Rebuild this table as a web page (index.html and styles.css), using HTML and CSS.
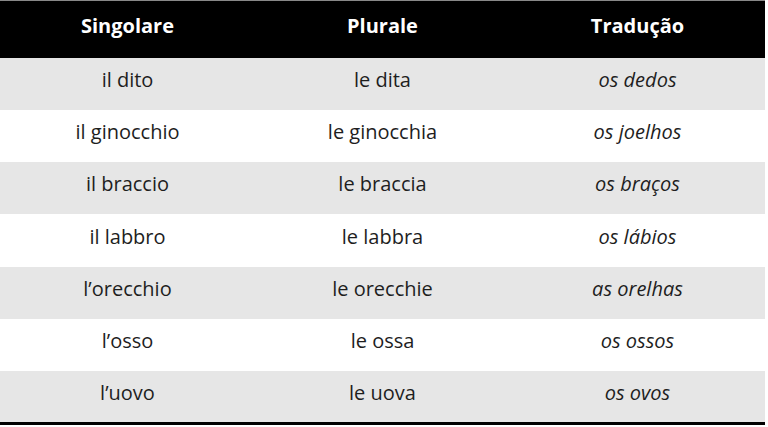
FILE: index.html
```html
<!DOCTYPE html>
<html lang="it">
<head>
<meta charset="utf-8">
<link rel="stylesheet" href="styles.css">
</head>
<body>
<table class="tbl">
  <thead>
    <tr><th>Singolare</th><th>Plurale</th><th>Tradução</th></tr>
  </thead>
  <tbody>
    <tr><td>il dito</td><td>le dita</td><td class="tr">os dedos</td></tr>
    <tr><td>il ginocchio</td><td>le ginocchia</td><td class="tr">os joelhos</td></tr>
    <tr><td>il braccio</td><td>le braccia</td><td class="tr">os braços</td></tr>
    <tr><td>il labbro</td><td>le labbra</td><td class="tr">os lábios</td></tr>
    <tr><td>l’orecchio</td><td>le orecchie</td><td class="tr">as orelhas</td></tr>
    <tr><td>l’osso</td><td>le ossa</td><td class="tr">os ossos</td></tr>
    <tr><td>l’uovo</td><td>le uova</td><td class="tr">os ovos</td></tr>
  </tbody>
</table>
</body>
</html>
```
FILE: styles.css
```css
html, body {
  margin: 0;
  padding: 0;
  background: #ffffff;
}
.tbl {
  width: 765px;
  border-collapse: collapse;
  table-layout: fixed;
  font-family: "Open Sans", "Noto Sans", sans-serif;
  font-size: 20px;
  color: #1e1e1e;
  border-bottom: 3px solid #000;
}
.tbl th {
  background: #000;
  color: #fff;
  font-weight: 700;
  height: 57px;
  padding: 0 0 8px 0;
  box-sizing: border-box;
  text-align: center;
  vertical-align: middle;
  border-top: 1px solid #888;
}
.tbl td {
  height: 52.3px;
  padding: 0 0 9px 0;
  box-sizing: border-box;
  text-align: center;
  vertical-align: middle;
}
.tbl tbody tr:nth-child(odd) td {
  background: #e6e6e6;
}
.tbl td.tr {
  font-style: italic;
}
```
